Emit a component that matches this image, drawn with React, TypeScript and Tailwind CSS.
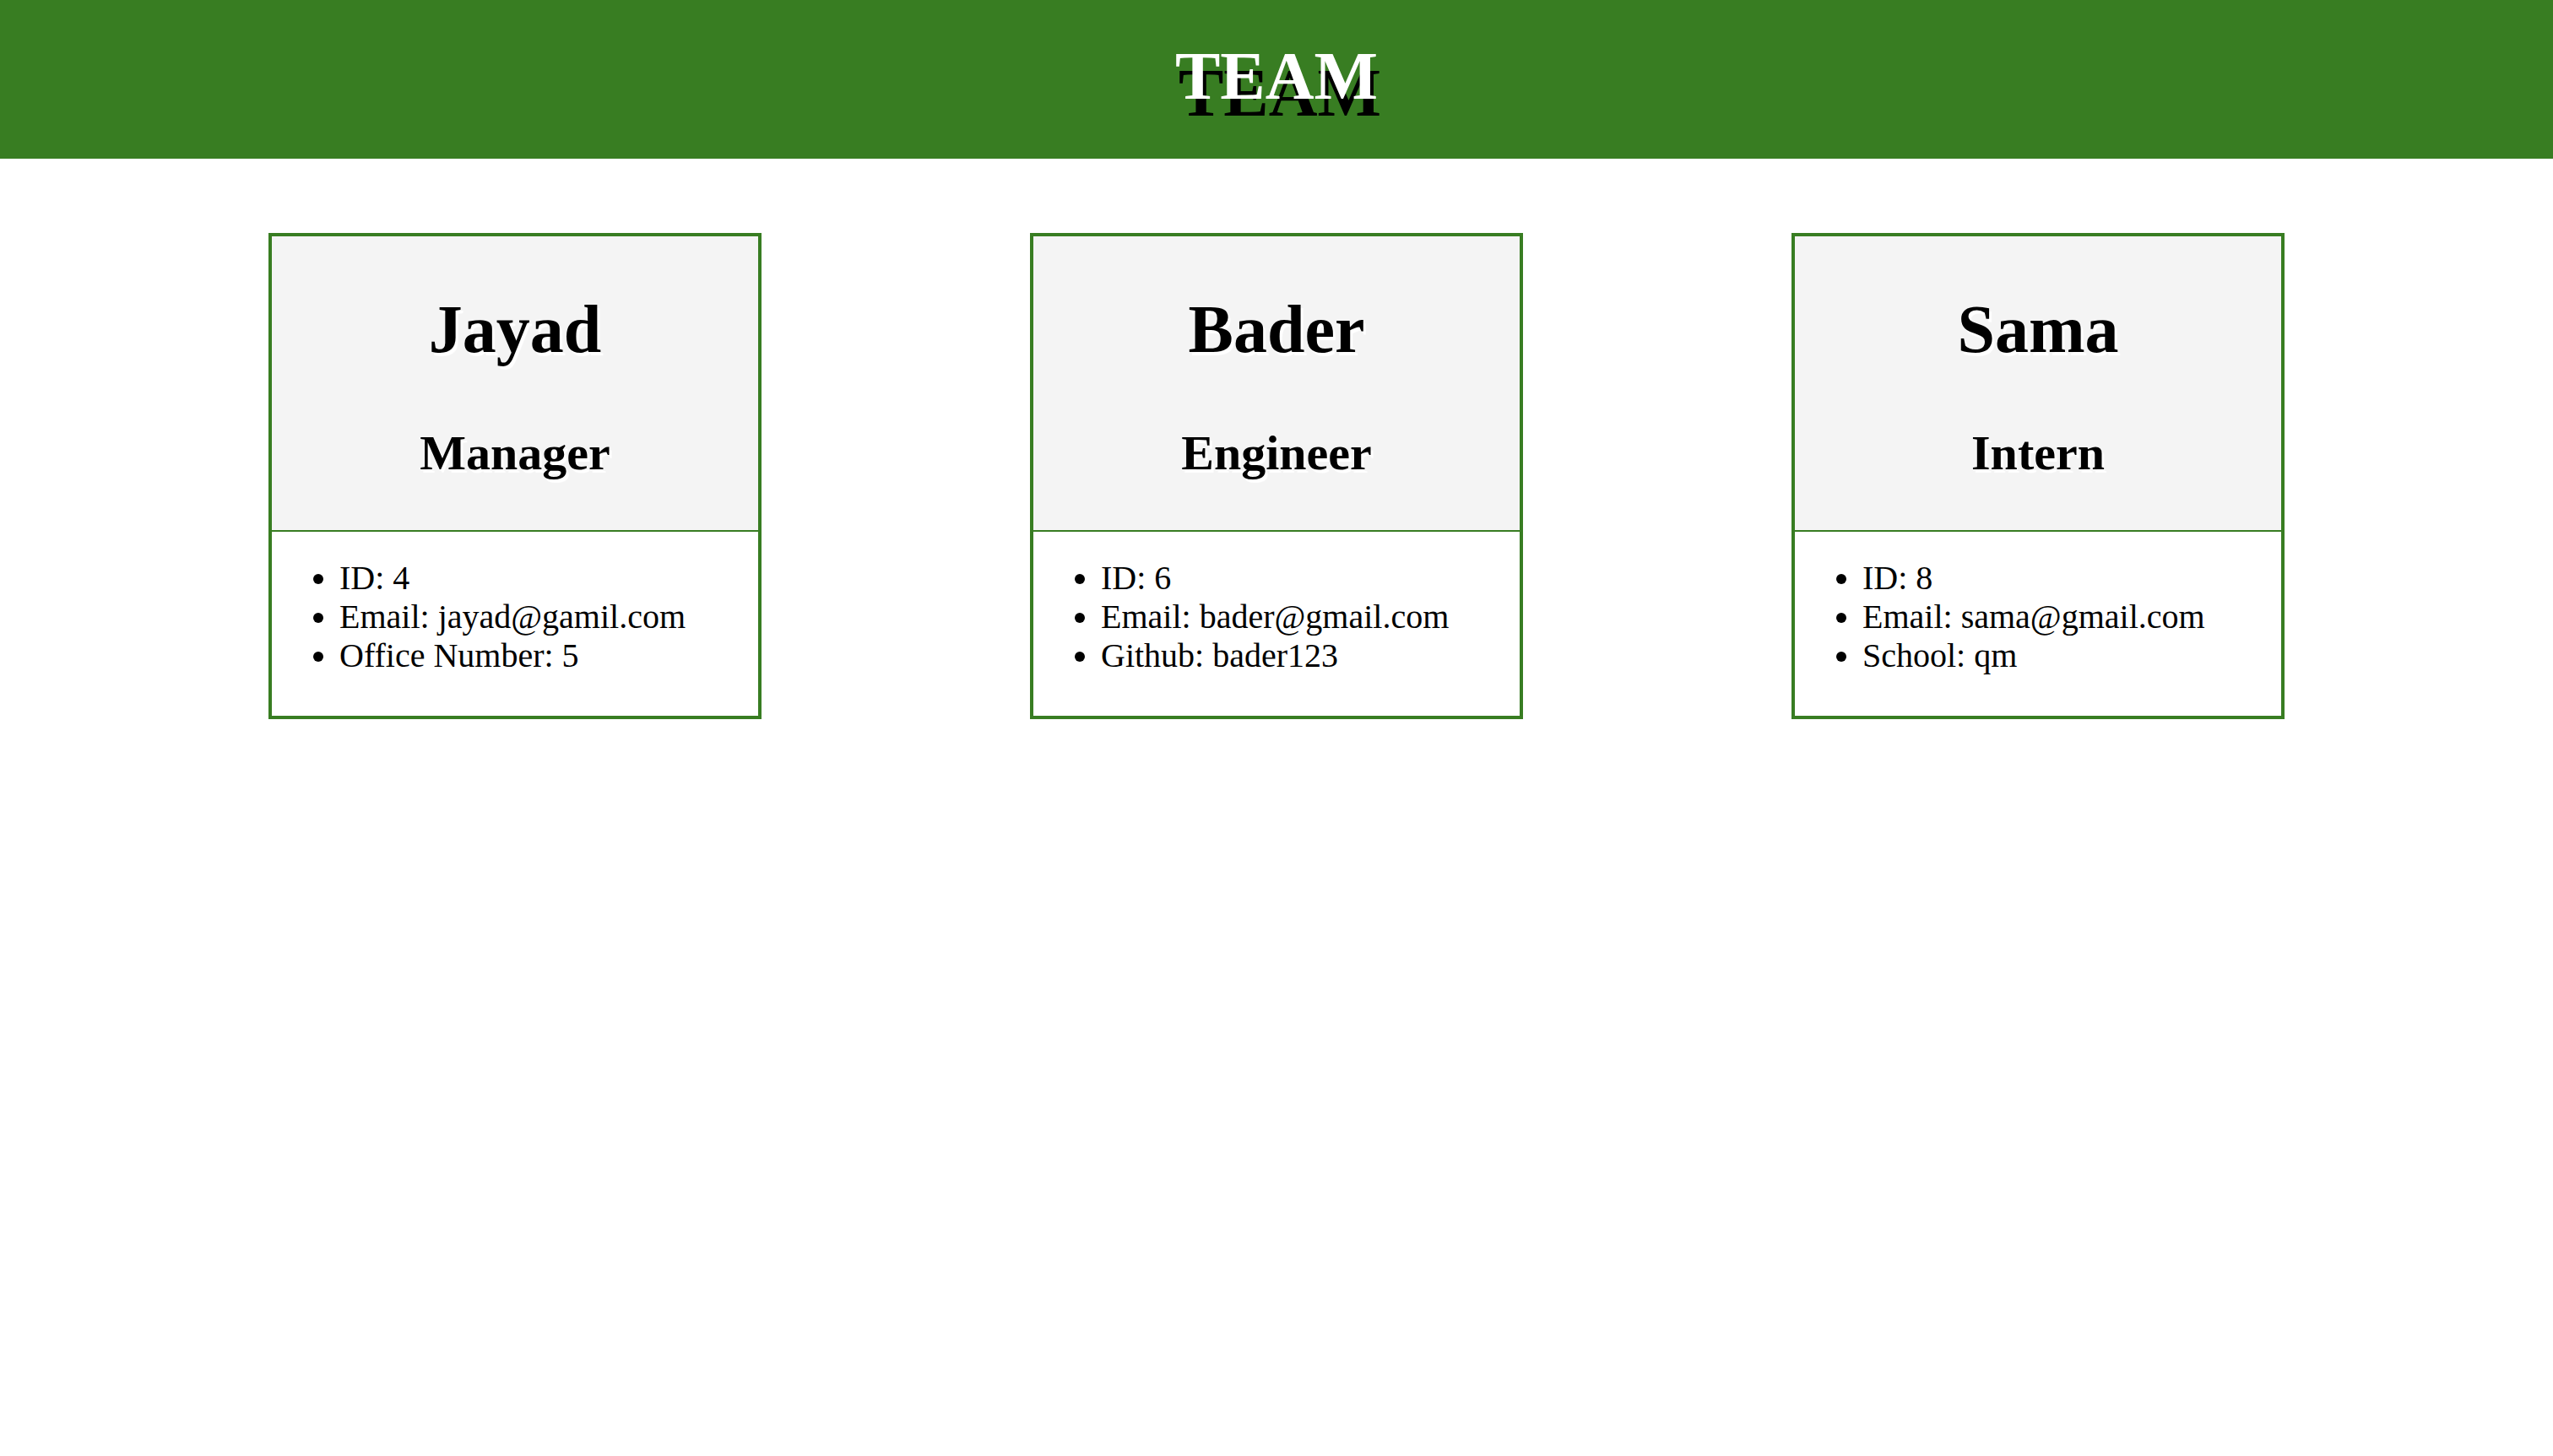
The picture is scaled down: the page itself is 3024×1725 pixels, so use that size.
import React from "react";

type Member = {
  name: string;
  role: string;
  items: string[];
};

const members: Member[] = [
  {
    name: "Jayad",
    role: "Manager",
    items: ["ID: 4", "Email: jayad@gamil.com", "Office Number: 5"],
  },
  {
    name: "Bader",
    role: "Engineer",
    items: ["ID: 6", "Email: bader@gmail.com", "Github: bader123"],
  },
  {
    name: "Sama",
    role: "Intern",
    items: ["ID: 8", "Email: sama@gmail.com", "School: qm"],
  },
];

function Card({ m }: { m: Member }) {
  return (
    <div className="w-[584px] border-4 border-[#387d22] bg-white flex flex-col">
      <div className="bg-[#f4f4f4] h-[350px] flex flex-col items-center pt-[66px] border-b-2 border-[#387d22]">
        <h2 className="text-[80px] leading-[88px] font-bold text-black [text-shadow:3px_4px_1px_#ffffff]">
          {m.name}
        </h2>
        <h3 className="mt-[71px] text-[58px] leading-[64px] font-bold text-black [text-shadow:3px_4px_1px_#ffffff]">
          {m.role}
        </h3>
      </div>
      <ul className="list-disc pl-[80px] pt-[32px] pb-[48px] text-[40px] leading-[46px] text-black">
        {m.items.map((it) => (
          <li key={it}>{it}</li>
        ))}
      </ul>
    </div>
  );
}

export default function App() {
  return (
    <div className="min-h-[1725px] w-full bg-white font-['Liberation_Serif','Times_New_Roman',serif]">
      <header className="h-[188px] bg-[#387d22] flex justify-center pt-[46px]">
        <h1 className="text-[80px] leading-[88px] font-bold text-white [text-shadow:4px_20px_0_#000000]">
          TEAM
        </h1>
      </header>
      <main className="mt-[88px] flex justify-evenly items-start">
        {members.map((m) => (
          <Card key={m.name} m={m} />
        ))}
      </main>
    </div>
  );
}
